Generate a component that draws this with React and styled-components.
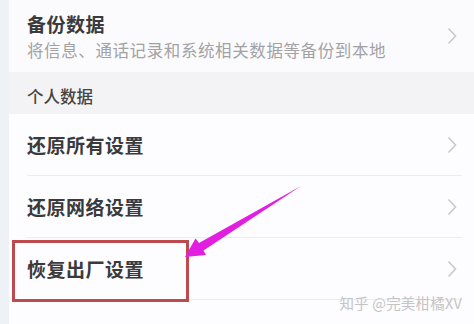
import styled, { createGlobalStyle } from "styled-components";

const GlobalStyle = createGlobalStyle`
  html, body {
    margin: 0;
    padding: 0;
    background: #eef1f6;
  }
  body {
    font-family: "Noto Sans CJK SC", "Noto Sans", sans-serif;
    width: 474px;
    height: 324px;
    overflow: hidden;
  }
`;

const Page = styled.div`
  position: relative;
  width: 474px;
  height: 324px;
  padding-left: 9px;
  box-sizing: border-box;
  display: flex;
  flex-direction: column;
  overflow: hidden;
`;

const Card = styled.div`
  background: ${(p) => p.bg || "#fdfcfe"};
  display: flex;
  flex-direction: column;
  flex: ${(p) => (p.grow ? 1 : "none")};
`;

const Row = styled.div`
  display: flex;
  align-items: center;
  height: ${(p) => p.h || 62}px;
  padding: 0 17px 0 18px;
  box-sizing: border-box;
  position: relative;
  &::after {
    content: "";
    display: ${(p) => (p.divider ? "block" : "none")};
    position: absolute;
    left: 18px;
    right: 12px;
    bottom: 0;
    height: 1px;
    background: #ececef;
  }
`;

const Texts = styled.div`
  flex: 1;
  display: flex;
  flex-direction: column;
  gap: 3px;
`;

const Title = styled.div`
  font-size: 19px;
  line-height: 24px;
  color: #3a3a3c;
  font-weight: 600;
  letter-spacing: 0.5px;
`;

const Sub = styled.div`
  font-size: 16.5px;
  line-height: 22px;
  color: #a2a2a4;
  letter-spacing: 0.6px;
`;

const Section = styled.div`
  height: 42px;
  display: flex;
  align-items: flex-end;
  padding: 0 0 6px 18px;
  box-sizing: border-box;
  font-size: 16.5px;
  color: #444;
  font-weight: 500;
  background: #f3f3f5;
`;

const Chevron = () => (
  <svg width="10" height="18" viewBox="0 0 10 18">
    <polyline points="1.5,1.5 8.5,9 1.5,16.5" fill="none" stroke="#c9c9cb" strokeWidth="1.6" />
  </svg>
);

const RedBox = styled.div`
  position: absolute;
  left: 12px;
  top: 240px;
  width: 177px;
  height: 62px;
  border: 3px solid #bd4a4c;
  box-sizing: border-box;
`;

const Overlay = styled.svg`
  position: absolute;
  left: 0;
  top: 0;
  pointer-events: none;
`;

const Watermark = styled.div`
  position: absolute;
  right: 12px;
  bottom: 11px;
  font-size: 14.5px;
  color: #c4c4c6;
  text-shadow: 0 0 2px #fff;
  letter-spacing: 0.2px;
`;

const items = ["还原所有设置", "还原网络设置", "恢复出厂设置"];

export default function App() {
  return (
    <>
      <GlobalStyle />
      <Page>
        <Card bg="#fbfbfd">
          <Row h={72}>
            <Texts>
              <Title>备份数据</Title>
              <Sub>将信息、通话记录和系统相关数据等备份到本地</Sub>
            </Texts>
            <Chevron />
          </Row>
        </Card>
        <Section>个人数据</Section>
        <Card grow>
          {items.map((t) => (
            <Row key={t} divider>
              <Texts>
                <Title>{t}</Title>
              </Texts>
              <Chevron />
            </Row>
          ))}
        </Card>
        <RedBox />
        <Overlay width="474" height="324">
          <polygon
            points="301,186 203.5,250.5 206,255 185,257 195.5,238.5 199,243"
            fill="#e21fe0"
          />
        </Overlay>
        <Watermark>知乎 @完美柑橘XV</Watermark>
      </Page>
    </>
  );
}
